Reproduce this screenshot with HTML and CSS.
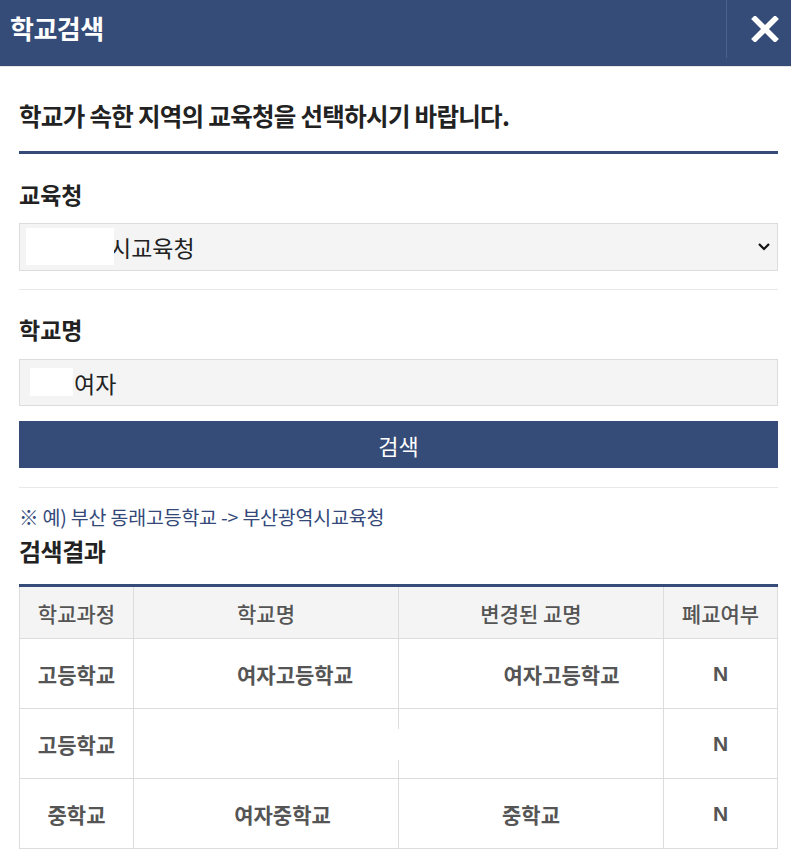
FILE: index.html
```html
<!DOCTYPE html>
<html>
  <head>
    <meta charset="UTF-8">
    <meta name="viewport" content="width=device-width, initial-scale=1.0">
    <title>학교검색</title>
    <link rel="stylesheet" href="styles.css">
  </head>
  <body>

    <div class="popup-header">
      <h1>학교검색</h1>
      <button type="button" class="btn-close" aria-label="닫기">
        <svg width="28" height="26" viewBox="0 0 28 26">
          <path d="M4 3 L24 23 M24 3 L4 23" stroke="#fff" stroke-width="5.5" stroke-linecap="square" fill="none"/>
        </svg>
      </button>
    </div>

    <div class="popup-body">
      <p class="intro">학교가 속한 지역의 교육청을 선택하시기 바랍니다.</p>

      <form id="searchForm" class="search-form">
        <label for="office" class="field-label">교육청</label>
        <div class="select-wrap">
          <select id="office" name="office">
            <option>시교육청</option>
          </select>
          <span class="mask mask-office"></span>
          <svg class="chevron" width="14" height="10" viewBox="0 0 14 10">
            <path d="M2 2 L7 7 L12 2" stroke="#111" stroke-width="2.2" fill="none"/>
          </svg>
        </div>

        <hr class="divider">

        <label for="schoolName" class="field-label">학교명</label>
        <div class="input-wrap">
          <input type="text" id="schoolName" name="schoolName" value="여자">
          <span class="mask mask-name"></span>
        </div>

        <button type="button" class="btn-search">검색</button>
      </form>

      <hr class="divider">

      <p class="note">※ 예) 부산 동래고등학교 -&gt; 부산광역시교육청</p>
      <h2 class="result-title">검색결과</h2>

      <table class="result-table">
        <thead>
          <tr>
            <th class="col-course">학교과정</th>
            <th class="col-name">학교명</th>
            <th class="col-changed">변경된 교명</th>
            <th class="col-closed">폐교여부</th>
          </tr>
        </thead>
        <tbody>
          <tr>
            <td>고등학교</td>
            <td><span class="gap gap-58"></span>여자고등학교</td>
            <td><span class="gap gap-61"></span>여자고등학교</td>
            <td class="yn">N</td>
          </tr>
          <tr>
            <td>고등학교</td>
            <td class="masked"><span class="mask mask-row"></span></td>
            <td></td>
            <td class="yn">N</td>
          </tr>
          <tr>
            <td>중학교</td>
            <td><span class="gap gap-33"></span>여자중학교</td>
            <td>중학교</td>
            <td class="yn">N</td>
          </tr>
        </tbody>
      </table>
    </div>

  </body>
</html>
```

FILE: styles.css
```css
body {
  font-family: "Noto Sans CJK KR", "Noto Sans", sans-serif;
  margin: 0;
  padding: 0;
  background-color: #fff;
  color: #222;
}

/* header bar */
.popup-header {
  display: flex;
  align-items: stretch;
  height: 67px;
  background-color: #344c77;
  border-bottom: 1px solid #e6e6e6;
  box-sizing: border-box;
}

.popup-header h1 {
  flex: 1;
  margin: 0;
  padding-left: 10px;
  font-size: 26px;
  font-weight: 700;
  letter-spacing: -0.5px;
  line-height: 56px;
  color: #fff;
}

.btn-close {
  width: 65px;
  height: 58px;
  padding: 0 0 0 12px;
  border: none;
  border-left: 1px solid #4a6189;
  background: transparent;
  display: flex;
  align-items: center;
  justify-content: center;
  cursor: pointer;
}

.popup-body {
  padding: 0 13px 0 19px;
}

.intro {
  margin: 32px 0 0;
  padding-bottom: 18px;
  border-bottom: 3px solid #344c77;
  font-size: 24.5px;
  font-weight: 700;
  letter-spacing: -0.7px;
  line-height: 34px;
  color: #222;
}

.search-form {
  display: flex;
  flex-direction: column;
}

.field-label {
  display: block;
  font-size: 23px;
  font-weight: 700;
  line-height: 30px;
  color: #222;
}

.search-form .field-label:first-child {
  margin: 25px 0 14px;
}

.divider + .field-label {
  margin: 24px 0 15px;
}

.select-wrap, .input-wrap {
  position: relative;
}

select, input {
  width: 100%;
  box-sizing: border-box;
  margin: 0;
  border: 1px solid #dcdcdc;
  background-color: #f4f4f4;
  font-family: inherit;
  font-size: 23px;
  color: #222;
  outline: none;
}

select {
  height: 48px;
  padding: 0 40px 0 90px;
  appearance: none;
  -webkit-appearance: none;
  border-radius: 0;
}

input {
  height: 47px;
  padding: 0 10px 0 54px;
}

.mask {
  position: absolute;
  background-color: #fff;
}

.mask-office {
  left: 7px;
  top: 5px;
  width: 88px;
  height: 37px;
}

.mask-name {
  left: 11px;
  top: 9px;
  width: 43px;
  height: 28px;
}

.chevron {
  position: absolute;
  right: 7px;
  top: 19px;
  pointer-events: none;
}

.btn-search {
  margin-top: 15px;
  height: 47px;
  border: none;
  background-color: #344c77;
  color: #fff;
  font-family: inherit;
  font-size: 22px;
  cursor: pointer;
}

.divider {
  margin: 18px 0 0;
  border: none;
  border-top: 1px solid #e8e8e8;
  height: 0;
}

.search-form + .divider {
  margin-top: 19px;
}

.note {
  margin: 16px 0 0;
  font-size: 19.5px;
  letter-spacing: -0.2px;
  line-height: 26px;
  color: #34497a;
}

.result-title {
  margin: 6px 0 0;
  font-size: 24px;
  font-weight: 700;
  letter-spacing: -0.5px;
  line-height: 30px;
  color: #222;
}

/* result table */
.result-table {
  width: 100%;
  margin-top: 18px;
  border-collapse: collapse;
  border-top: 3px solid #344c77;
  table-layout: fixed;
}

.result-table th, .result-table td {
  border: 1px solid #dcdcdc;
  text-align: center;
  font-size: 21px;
  color: #555;
  padding: 0;
}

.result-table th {
  height: 51px;
  background-color: #f4f4f4;
  font-weight: 500;
}

.result-table td {
  height: 69px;
  font-weight: 700;
}

.col-course { width: 113px; }
.col-name { width: 264px; }
.col-changed { width: 264px; }

.yn {
  font-family: "Liberation Sans", Arial, sans-serif;
  font-size: 19px;
}

.gap {
  display: inline-block;
}

.gap-58 { width: 58px; }
.gap-61 { width: 61px; }
.gap-33 { width: 33px; }

.masked {
  position: relative;
}

.mask-row {
  left: 100px;
  top: 20px;
  width: 220px;
  height: 31px;
  z-index: 1;
}
```
